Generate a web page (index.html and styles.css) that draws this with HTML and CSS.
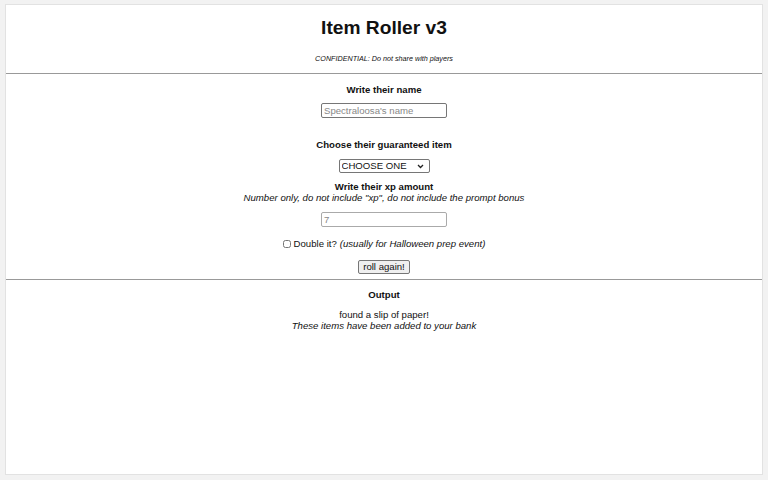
FILE: index.html
```html
<!DOCTYPE html>
<html>
<head>
<meta charset="utf-8">
<link rel="stylesheet" href="styles.css">
</head>
<body>
<div class="page">
  <header class="head">
    <h1 class="title">Item Roller v3</h1>
    <p class="confidential">CONFIDENTIAL: Do not share with players</p>
  </header>
  <hr class="rule">
  <section class="form">
    <h3 class="label">Write their name</h3>
    <input class="field" type="text" placeholder="Spectraloosa's name">
    <h3 class="label label-gap">Choose their guaranteed item</h3>
    <select class="choose"><option>CHOOSE ONE</option></select>
    <h3 class="label label-xp">Write their xp amount</h3>
    <p class="hint">Number only, do not include "xp", do not include the prompt bonus</p>
    <input class="field field-xp" type="text" placeholder="7">
    <label class="double"><input class="check" type="checkbox"> Double it? <i>(usually for Halloween prep event)</i></label>
    <button class="roll">roll again!</button>
  </section>
  <hr class="rule rule-low">
  <section class="output">
    <h3 class="label">Output</h3>
    <p class="result">found a slip of paper!<br><i>These items have been added to your bank</i></p>
  </section>
</div>
</body>
</html>
```
FILE: styles.css
```css
html, body { margin: 0; padding: 0; }
body {
  background: #f2f2f2;
  font-family: "Liberation Sans", Arial, sans-serif;
  font-size: 9.6px;
  color: #111;
  padding: 4px 5px 5px 5px;
}
.page {
  background: #fff;
  height: 471px;
  box-sizing: border-box;
  border: 1px solid #e2e2e2;
  text-align: center;
}
.head { padding-top: 11px; }
.title {
  margin: 0;
  font-size: 19.2px;
  font-weight: bold;
  line-height: 24px;
}
.confidential {
  margin: 14px 0 0 0;
  font-size: 7.2px;
  font-style: italic;
  line-height: 10px;
}
.rule {
  margin: 9px 0 0 0;
  border: 0;
  border-top: 1px solid #999;
  height: 0;
}
.rule-low { margin-top: 5px; }
.form { display: flex; flex-direction: column; align-items: center; padding-top: 10px; }
.label {
  margin: 0;
  font-size: 9.6px;
  font-weight: bold;
  line-height: 12px;
}
.field {
  margin-top: 7px;
  width: 126px;
  height: 15px;
  box-sizing: border-box;
  border: 1px solid #767676;
  border-radius: 2px;
  font-family: inherit;
  font-size: 9.6px;
  padding: 0 2px;
}
.field::placeholder { color: #888; }
.field-xp { border-color: #aaa; margin-top: 9px; }
.label-gap { margin-top: 21px; }
.choose {
  -webkit-appearance: none;
  appearance: none;
  margin-top: 8px;
  width: 91px;
  height: 14px;
  box-sizing: border-box;
  font-family: inherit;
  font-size: 9.6px;
  line-height: 12px;
  color: #111;
  padding: 0 0 0 2px;
  border: 1px solid #767676;
  border-radius: 2px;
  background: #fff url("data:image/svg+xml;utf8,<svg xmlns='http://www.w3.org/2000/svg' width='7' height='5' viewBox='0 0 7 5'><path d='M1 1l2.5 2.5L6 1' fill='none' stroke='%23222' stroke-width='1.3'/></svg>") no-repeat right 5px center;
}
.label-xp { margin-top: 8px; }
.hint { margin: -1px 0 0 0; font-style: italic; line-height: 11px; }
.double { margin-top: 11px; display: flex; align-items: center; gap: 3px; line-height: 12px; }
.check { margin: 0; width: 8px; height: 8px; }
.roll {
  margin-top: 10px;
  font-family: inherit;
  font-size: 9.6px;
  height: 14px;
  padding: 0 4px;
  line-height: 12px;
  border: 1px solid #767676;
  border-radius: 2px;
  background: #efefef;
  color: #111;
}
.output { padding-top: 9px; }
.output .label { line-height: 12px; }
.result { margin: 8px 0 0 0; line-height: 11px; }
```
